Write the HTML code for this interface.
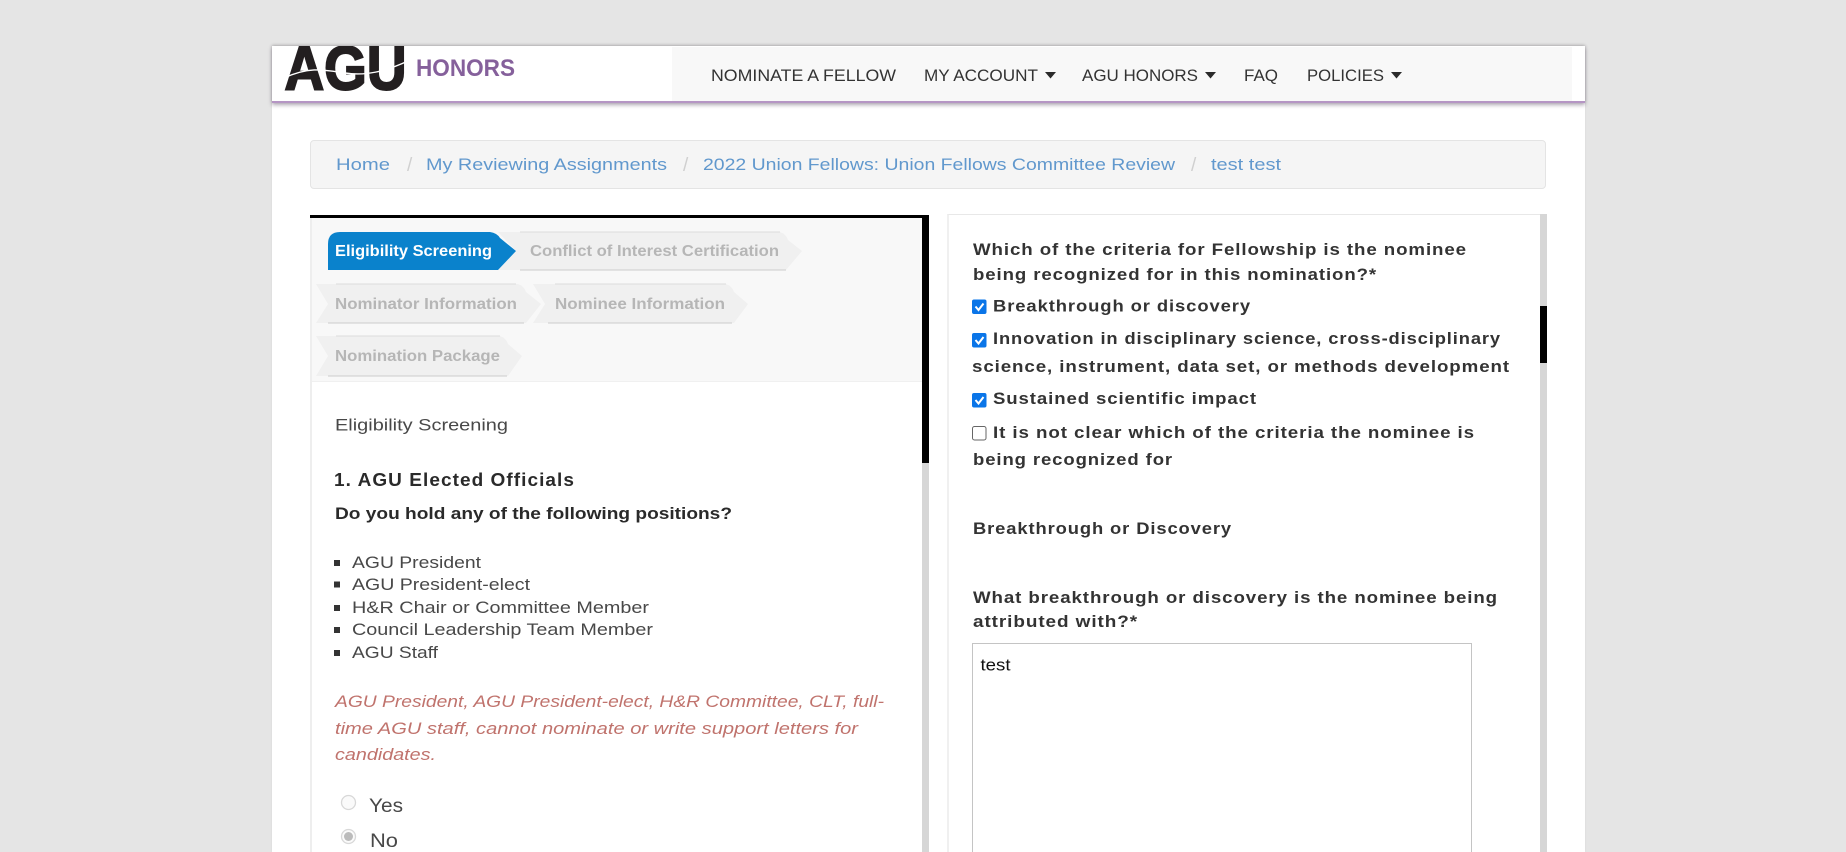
<!DOCTYPE html>
<html lang="en"><head><meta charset="utf-8"><title>AGU Honors</title>
<style>
html,body{margin:0;padding:0;width:1846px;height:852px;overflow:hidden;background:#e5e5e5}
body{position:relative;font-family:"Liberation Sans",sans-serif}
div{position:absolute;box-sizing:border-box}
#page{left:272px;top:46px;width:1313px;height:806px;background:#fff;box-shadow:0 0 2px #d8d8d8}
#hdr{left:272px;top:46px;width:1313px;height:57px;background:#fff;border-bottom:2px solid #b595c4;box-shadow:0 2px 4px rgba(60,40,70,.4),0 -1px 3px rgba(0,0,0,.18)}
#nav{left:672px;top:47px;width:900px;height:54px;background:#f8f8f8}
#crumb{left:310px;top:140px;width:1236px;height:49px;background:#f5f5f5;border:1px solid #e4e4e4;border-radius:4px}
#lp{left:310px;top:215px;width:612px;height:637px;border-left:2px solid #eee;background:#fff}
#ltop{left:310px;top:215px;width:619px;height:3px;background:#000}
#band{left:312px;top:218px;width:610px;height:164px;background:#f8f8f8;border-bottom:1px solid #f0f0f0}
#ls1{left:922px;top:215px;width:7px;height:248px;background:#000}
#ls2{left:922px;top:463px;width:7px;height:389px;background:#d6d6d6}
#rp{left:947px;top:214px;width:599px;height:638px;border-left:2px solid #f0f0f0;border-top:1px solid #e8e8e8}
#rs1{left:1540px;top:214px;width:7px;height:638px;background:#d6d6d6}
#rs2{left:1540px;top:306px;width:7px;height:57px;background:#000}
#ta{left:972px;top:643px;width:500px;height:209px;border:1px solid #c4c4c4;border-bottom:0;background:#fff}
svg{position:absolute;left:0;top:0}
text{font-family:"Liberation Sans",sans-serif}
.n{font-size:17px;fill:#333}
.c{font-size:17px;fill:#6198cd}
.s{font-size:19px;fill:#d0d0d0}
.t{font-size:15.5px;font-weight:700;fill:#b6b6b6}
.b{font-size:17px;fill:#484848}
.h{font-size:16.5px;font-weight:700;fill:#333;letter-spacing:.8px}
.r{font-size:17px;font-style:italic;fill:#c0736d}
</style></head>
<body>
<div id="page"></div>
<div id="hdr"></div>
<div id="nav"></div>
<div id="crumb"></div>
<div id="lp"></div>
<div id="band"></div>
<div id="ltop"></div>
<div id="ls1"></div>
<div id="ls2"></div>
<div id="rp"></div>
<div id="rs1"></div>
<div id="rs2"></div>
<div id="ta"></div>
<svg width="1846" height="852" viewBox="0 0 1846 852" xmlns="http://www.w3.org/2000/svg">
<defs><clipPath id="lg"><rect x="280" y="46" width="140" height="50"/></clipPath></defs>
<g clip-path="url(#lg)">
<text x="284.500" y="89.500" font-size="62" font-weight="700" fill="#231f20" stroke="#231f20" stroke-width="2" textLength="122" lengthAdjust="spacingAndGlyphs">AGU</text>
<path d="M284 78C310 66 325 70 345 73S385 72 410 60" fill="none" stroke="#fff" stroke-width="1.400"/>
</g>
<text x="416" y="76" font-size="24" font-weight="700" fill="#85609b" textLength="99" lengthAdjust="spacingAndGlyphs">HONORS</text>

<text class="n" x="711" y="81" textLength="185" lengthAdjust="spacingAndGlyphs">NOMINATE A FELLOW</text>
<text class="n" x="924" y="81" textLength="114" lengthAdjust="spacingAndGlyphs">MY ACCOUNT</text>
<path d="M1045 72h11l-5.500 6.500z" fill="#2b2b2b"/>
<text class="n" x="1082" y="81" textLength="116" lengthAdjust="spacingAndGlyphs">AGU HONORS</text>
<path d="M1205 72h11l-5.500 6.500z" fill="#2b2b2b"/>
<text class="n" x="1244" y="81" textLength="34" lengthAdjust="spacingAndGlyphs">FAQ</text>
<text class="n" x="1307" y="81" textLength="77" lengthAdjust="spacingAndGlyphs">POLICIES</text>
<path d="M1391 72h11l-5.500 6.500z" fill="#2b2b2b"/>

<text class="c" x="336" y="170" textLength="54" lengthAdjust="spacingAndGlyphs">Home</text>
<text class="s" x="407" y="171">/</text>
<text class="c" x="426" y="170" textLength="241" lengthAdjust="spacingAndGlyphs">My Reviewing Assignments</text>
<text class="s" x="683" y="171">/</text>
<text class="c" x="703" y="170" textLength="472" lengthAdjust="spacingAndGlyphs">2022 Union Fellows: Union Fellows Committee Review</text>
<text class="s" x="1191" y="171">/</text>
<text class="c" x="1211" y="170" textLength="70" lengthAdjust="spacingAndGlyphs">test test</text>

<path d="M498 232H780Q786 234 788 240L802 251L786 270H498L516 251Z" fill="#f0f0f0"/>
<path d="M520 270H786" stroke="#cbcbcb"/><path d="M520 232H780" stroke="#dcdcdc"/>
<path d="M328 270V244Q328 232 340 232H490Q497 233 500 238L516 251L498 270Z" fill="#0a82cc"/>
<path d="M316 284H518Q524 286 526 292L541 304L526 323H316L328 304Z" fill="#f0f0f0"/>
<path d="M328 323H524" stroke="#cbcbcb"/><path d="M336 284H516" stroke="#dcdcdc"/>
<path d="M533 284H726Q732 286 734 292L748 304L734 323H533L545 304Z" fill="#f0f0f0"/>
<path d="M548 323H732" stroke="#cbcbcb"/><path d="M555 284H726" stroke="#dcdcdc"/>
<path d="M316 336H500Q506 338 508 344L522 356L508 376H316L328 356Z" fill="#f0f0f0"/>
<path d="M328 376H507" stroke="#cbcbcb"/><path d="M336 336H500" stroke="#dcdcdc"/>
<text x="335" y="256" font-size="15.500" font-weight="700" fill="#fff" textLength="157" lengthAdjust="spacingAndGlyphs">Eligibility Screening</text>
<text class="t" x="530" y="256" textLength="249" lengthAdjust="spacingAndGlyphs">Conflict of Interest Certification</text>
<text class="t" x="335" y="309" textLength="182" lengthAdjust="spacingAndGlyphs">Nominator Information</text>
<text class="t" x="555" y="309" textLength="170" lengthAdjust="spacingAndGlyphs">Nominee Information</text>
<text class="t" x="335" y="361" textLength="165" lengthAdjust="spacingAndGlyphs">Nomination Package</text>

<text class="b" x="335" y="430.500" textLength="173" lengthAdjust="spacingAndGlyphs">Eligibility Screening</text>
<text x="334" y="486" font-size="18" font-weight="700" fill="#2a2a2a" letter-spacing="1" textLength="241" lengthAdjust="spacingAndGlyphs">1. AGU Elected Officials</text>
<text x="335" y="519" font-size="17" font-weight="700" fill="#2a2a2a" textLength="397" lengthAdjust="spacingAndGlyphs">Do you hold any of the following positions?</text>
<rect x="334" y="560" width="6" height="6" fill="#333"/>
<rect x="334" y="581.500" width="6" height="6" fill="#333"/>
<rect x="334" y="605" width="6" height="6" fill="#333"/>
<rect x="334" y="627" width="6" height="6" fill="#333"/>
<rect x="334" y="650" width="6" height="6" fill="#333"/>
<text class="b" x="352" y="568" textLength="129" lengthAdjust="spacingAndGlyphs">AGU President</text>
<text class="b" x="352" y="590" textLength="178" lengthAdjust="spacingAndGlyphs">AGU President-elect</text>
<text class="b" x="352" y="613" textLength="297" lengthAdjust="spacingAndGlyphs">H&amp;R Chair or Committee Member</text>
<text class="b" x="352" y="635" textLength="301" lengthAdjust="spacingAndGlyphs">Council Leadership Team Member</text>
<text class="b" x="352" y="658" textLength="86" lengthAdjust="spacingAndGlyphs">AGU Staff</text>
<text class="r" x="335" y="707" textLength="549" lengthAdjust="spacingAndGlyphs">AGU President, AGU President-elect, H&amp;R Committee, CLT, full-</text>
<text class="r" x="335" y="734" textLength="523" lengthAdjust="spacingAndGlyphs">time AGU staff, cannot nominate or write support letters for</text>
<text class="r" x="335" y="760" textLength="101" lengthAdjust="spacingAndGlyphs">candidates.</text>
<circle cx="348.500" cy="802.500" r="7" fill="#fafafa" stroke="#d8d8d8" stroke-width="1.300"/>
<circle cx="348.500" cy="836.500" r="7" fill="#fafafa" stroke="#d8d8d8" stroke-width="1.300"/>
<circle cx="348.500" cy="836.500" r="4.500" fill="#bbb"/>
<text class="b" x="369" y="812" style="font-size:19px" textLength="34" lengthAdjust="spacingAndGlyphs">Yes</text>
<text class="b" x="370" y="847" style="font-size:19px" textLength="28" lengthAdjust="spacingAndGlyphs">No</text>

<text class="h" x="973" y="255" textLength="494" lengthAdjust="spacingAndGlyphs">Which of the criteria for Fellowship is the nominee</text>
<text class="h" x="973" y="280" textLength="404" lengthAdjust="spacingAndGlyphs">being recognized for in this nomination?*</text>
<rect x="972" y="299.500" width="14.500" height="14.500" rx="2" fill="#0a75e8"/>
<path d="M975.500 306.500l3 3.500l5-6.500" fill="none" stroke="#fff" stroke-width="2"/>
<rect x="972" y="333" width="14.500" height="14.500" rx="2" fill="#0a75e8"/>
<path d="M975.500 340l3 3.500l5-6.500" fill="none" stroke="#fff" stroke-width="2"/>
<rect x="972" y="393" width="14.500" height="14.500" rx="2" fill="#0a75e8"/>
<path d="M975.500 400l3 3.500l5-6.500" fill="none" stroke="#fff" stroke-width="2"/>
<rect x="972.500" y="426.500" width="13.500" height="13.500" rx="2" fill="#fff" stroke="#666"/>
<text class="h" x="993" y="311.500" textLength="258" lengthAdjust="spacingAndGlyphs">Breakthrough or discovery</text>
<text class="h" x="993" y="344" textLength="508" lengthAdjust="spacingAndGlyphs">Innovation in disciplinary science, cross-disciplinary</text>
<text class="h" x="972" y="372" textLength="538" lengthAdjust="spacingAndGlyphs">science, instrument, data set, or methods development</text>
<text class="h" x="993" y="404" textLength="264" lengthAdjust="spacingAndGlyphs">Sustained scientific impact</text>
<text class="h" x="993" y="438" textLength="482" lengthAdjust="spacingAndGlyphs">It is not clear which of the criteria the nominee is</text>
<text class="h" x="973" y="465" textLength="200" lengthAdjust="spacingAndGlyphs">being recognized for</text>
<text class="h" x="973" y="534" textLength="259" lengthAdjust="spacingAndGlyphs">Breakthrough or Discovery</text>
<text class="h" x="973" y="603" textLength="525" lengthAdjust="spacingAndGlyphs">What breakthrough or discovery is the nominee being</text>
<text class="h" x="973" y="627" textLength="165" lengthAdjust="spacingAndGlyphs">attributed with?*</text>
<text x="980.500" y="670.500" font-size="17" fill="#111" textLength="30" lengthAdjust="spacingAndGlyphs">test</text>
</svg>
</body></html>
